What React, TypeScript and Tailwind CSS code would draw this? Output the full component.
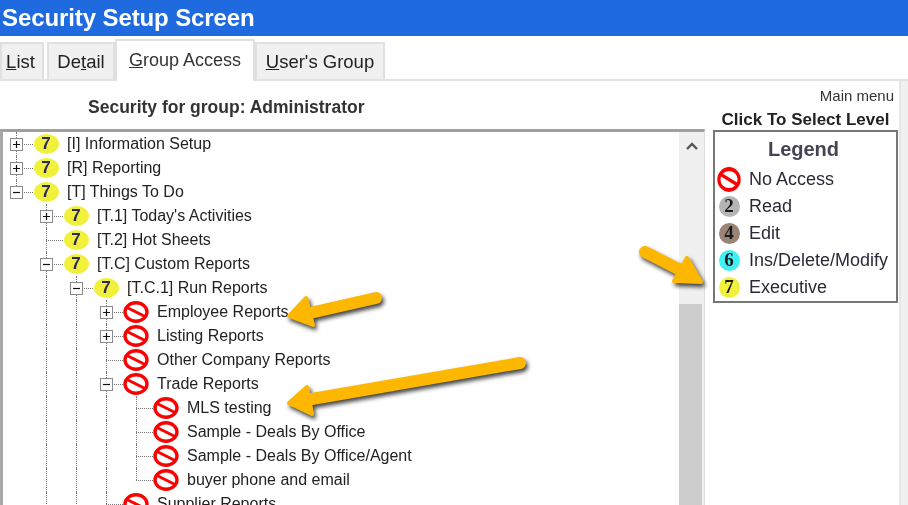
const arial = "font-['Liberation_Sans',Arial,sans-serif]";

type Row = {
  depth: number;
  guides: boolean[];
  box?: '+' | '-';
  up?: boolean;
  down?: boolean;
  level: 'none' | 'exec';
  text: string;
};

const rows: Row[] = [
  { depth: 0, guides: [], box: '+', up: true, down: true, level: 'exec', text: '[I] Information Setup' },
  { depth: 0, guides: [], box: '+', up: true, down: true, level: 'exec', text: '[R] Reporting' },
  { depth: 0, guides: [], box: '-', up: true, level: 'exec', text: '[T] Things To Do' },
  { depth: 1, guides: [false], box: '+', up: true, down: true, level: 'exec', text: "[T.1] Today's Activities" },
  { depth: 1, guides: [false], up: true, down: true, level: 'exec', text: '[T.2] Hot Sheets' },
  { depth: 1, guides: [false], box: '-', up: true, down: true, level: 'exec', text: '[T.C] Custom Reports' },
  { depth: 2, guides: [false, true], box: '-', up: true, down: true, level: 'exec', text: '[T.C.1] Run Reports' },
  { depth: 3, guides: [false, true, true], box: '+', up: true, down: true, level: 'none', text: 'Employee Reports' },
  { depth: 3, guides: [false, true, true], box: '+', up: true, down: true, level: 'none', text: 'Listing Reports' },
  { depth: 3, guides: [false, true, true], up: true, down: true, level: 'none', text: 'Other Company Reports' },
  { depth: 3, guides: [false, true, true], box: '-', up: true, down: true, level: 'none', text: 'Trade Reports' },
  { depth: 4, guides: [false, true, true, true], up: true, down: true, level: 'none', text: 'MLS testing' },
  { depth: 4, guides: [false, true, true, true], up: true, down: true, level: 'none', text: 'Sample - Deals By Office' },
  { depth: 4, guides: [false, true, true, true], up: true, down: true, level: 'none', text: 'Sample - Deals By Office/Agent' },
  { depth: 4, guides: [false, true, true, true], up: true, level: 'none', text: 'buyer phone and email' },
  { depth: 3, guides: [false, true, true], up: true, down: true, level: 'none', text: 'Supplier Reports' },
];

function NoAccess({ w = 26, h = 22 }: { w?: number; h?: number }) {
  return (
    <svg width={w} height={h} viewBox="0 0 26 22" preserveAspectRatio="none" className="shrink-0">
      <ellipse cx="13" cy="11" rx="11" ry="9.2" fill="#fff" stroke="#fa0000" strokeWidth="3.4" />
      <path d="M4 6.5 L22 15.5" stroke="#fa0000" strokeWidth="3" />
    </svg>
  );
}

function ExpandBox({ type }: { type: '+' | '-' }) {
  return (
    <svg width="13" height="13" viewBox="0 0 13 13" className="relative">
      <rect x="0.5" y="0.5" width="12" height="12" fill="#fff" stroke="#8a8a8a" />
      <path d={type === '+' ? 'M3 6.5H10M6.5 3V10' : 'M3 6.5H10'} stroke="#111" strokeWidth="1.2" />
    </svg>
  );
}

function TreeRow({ row }: { row: Row }) {
  return (
    <div className="flex h-6 shrink-0 items-center">
      {row.guides.map((g, i) => (
        <div key={i} className="relative h-full w-[30px] shrink-0">
          {g && <div className="absolute bottom-0 left-[13px] top-0 border-l border-dotted border-[#777]" />}
        </div>
      ))}
      <div className="relative flex h-full w-[30px] shrink-0 items-center">
        {row.up && <div className="absolute left-[13px] top-0 h-3 border-l border-dotted border-[#777]" />}
        {row.down && <div className="absolute bottom-0 left-[13px] h-3 border-l border-dotted border-[#777]" />}
        <div className="absolute left-[13px] right-0 top-3 border-t border-dotted border-[#777]" />
        {row.box && (
          <div className="ml-[7px]">
            <ExpandBox type={row.box} />
          </div>
        )}
      </div>
      <div className="flex w-[26px] shrink-0 justify-center">
        {row.level === 'none' ? (
          <NoAccess />
        ) : (
          <div className="flex h-[20px] w-[25px] items-center justify-center rounded-[50%] bg-[#f1f13c] font-['Liberation_Sans',Arial,sans-serif] text-[17px] font-bold text-[#2b2b55]">
            7
          </div>
        )}
      </div>
      <span className="ml-[8px] whitespace-nowrap font-['Liberation_Sans',Arial,sans-serif] text-[16px] leading-6 text-[#222]">
        {row.text}
      </span>
    </div>
  );
}

function Tab({ first, rest, width, active, under, extra = '' }: { first: string; rest: string; width: string; active?: boolean; under?: string; extra?: string }) {
  return (
    <div
      className={
        active
          ? `${width} flex h-[42px] items-center justify-center border-x-2 border-t-2 border-[#e0e0e0] bg-white pb-[2px] text-[18px] text-[#333]`
          : `${width} flex h-[37px] items-center justify-center border-x-2 border-t-2 border-[#e0e0e0] bg-[#f0f0f0] text-[18.5px] text-[#222] ${extra}`
      }
    >
      <span className="whitespace-nowrap">
        {first}
        {under && <span className="underline">{under}</span>}
        {rest}
      </span>
    </div>
  );
}

function LegendRow({ color, num, label }: { color?: string; num?: string; label: string }) {
  return (
    <div className="flex h-[27px] items-center">
      <div className="flex w-[24px] shrink-0 justify-center">
        {num ? (
          <div
            className="flex h-[21px] w-[21px] items-center justify-center rounded-full font-['Liberation_Serif',serif] text-[19px] font-bold text-[#1a1a1a]"
            style={{ backgroundColor: color }}
          >
            {num}
          </div>
        ) : (
          <NoAccess w={24} h={25} />
        )}
      </div>
      <span className="ml-[8px] whitespace-nowrap text-[18px] text-[#2a2a3a]">{label}</span>
    </div>
  );
}

function Arrows() {
  const arrow = 'fill-[#fdb700] stroke-[#fdb700]';
  return (
    <svg width="908" height="505" viewBox="0 0 908 505" className="pointer-events-none absolute left-0 top-0 drop-shadow-[2px_3px_2px_rgba(0,0,0,0.75)]">
      <g className={arrow} strokeLinecap="round" strokeLinejoin="round">
        <path d="M310 313 L376 298" strokeWidth="12" fill="none" />
        <path d="M289 316 L306 298 L313 325 Z" strokeWidth="4" />
        <path d="M312 399 L520 363" strokeWidth="12" fill="none" />
        <path d="M289 403 L307 387 L312 414 Z" strokeWidth="4" />
        <path d="M645 252 L688 274" strokeWidth="12" fill="none" />
        <path d="M701 282 L687 258 L674 281 Z" strokeWidth="4" />
      </g>
    </svg>
  );
}

export default function App() {
  return (
    <div className={`relative flex h-[505px] w-[908px] flex-col overflow-hidden bg-white ${arial} blur-[0.35px]`}>
      <div className="flex h-[36px] shrink-0 items-center bg-[#1e6ade] pl-[2px] text-[24px] font-bold tracking-[-0.1px] text-white">
        Security Setup Screen
      </div>
      <div className="flex h-[45px] shrink-0 items-end border-b-2 border-[#e2e2e2]">
        <div className="mr-[3px]">
          <Tab first="" under="L" rest="ist" width="w-[44px]" extra="pr-[3px]" />
        </div>
        <Tab first="De" under="t" rest="ail" width="w-[68px]" />
        <div className="-mb-[2px]">
          <Tab first="" under="G" rest="roup Access" width="w-[140px]" active />
        </div>
        <Tab first="" under="U" rest="ser's Group" width="w-[130px]" />
      </div>
      <div className="flex min-h-0 flex-1">
        <div className="flex w-[705px] shrink-0 flex-col">
          <div className="flex h-[48px] shrink-0 items-end pb-[9px] pl-[88px] text-[17.5px] font-bold text-[#333]">
            Security for group: Administrator
          </div>
          <div className="flex min-h-0 flex-1 border-l-[3px] border-r border-t-[3px] border-l-[#a8a8a8] border-r-[#dedede] border-t-[#a0a0a0]">
            <div className="flex min-w-0 flex-1 flex-col overflow-hidden">
              {rows.map((r, i) => (
                <TreeRow key={i} row={r} />
              ))}
            </div>
            <div className="flex w-[25px] shrink-0 flex-col bg-[#f0f0f0]">
              <div className="flex h-[172px] shrink-0 justify-center pt-[10px]">
                <svg width="12" height="8" viewBox="0 0 12 8">
                  <path d="M1 7 L6 2 L11 7" fill="none" stroke="#555" strokeWidth="2.4" />
                </svg>
              </div>
              <div className="mr-[2px] flex-1 bg-[#cdcdcd]" />
            </div>
          </div>
        </div>
        <div className="flex w-[196px] shrink-0 flex-col items-end border-r-2 border-[#e6e6e6] pr-[1px]">
          <div className="mt-[6px] pr-[4px] text-[15px] leading-[18px] text-[#333]">Main menu</div>
          <div className="mt-[6px] w-[185px] text-center text-[17px] font-bold leading-[18px] text-[#222]">
            Click To Select Level
          </div>
          <div className="mt-[1px] h-[173px] w-[185px] border-2 border-[#777] pl-[2px]">
            <div className="flex h-[34px] items-center justify-center pr-[6px] text-[20px] font-bold text-[#444455]">Legend</div>
            <LegendRow label="No Access" />
            <LegendRow num="2" color="#b5b5b5" label="Read" />
            <LegendRow num="4" color="#9a8478" label="Edit" />
            <LegendRow num="6" color="#3ff0f5" label="Ins/Delete/Modify" />
            <LegendRow num="7" color="#f1f13c" label="Executive" />
          </div>
        </div>
        <div className="flex-1 bg-[#f0f0f0]" />
      </div>
      <Arrows />
    </div>
  );
}
